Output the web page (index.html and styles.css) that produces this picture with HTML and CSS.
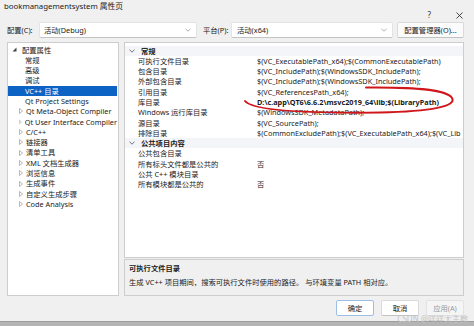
FILE: index.html
```html
<!DOCTYPE html>
<html>
    <head>
        <title>bookmanagementsystem 属性页</title>
        <link rel="stylesheet" href="styles.css">
    </head>
    <body>
        <div class="dialog">
            <div class="titlebar">
                <span class="title">bookmanagementsystem 属性页</span>
                <span class="help">?</span>
                <span class="close">
                    <svg width="7" height="7" viewBox="0 0 7 7"><path d="M0.5 0.5L6.5 6.5M6.5 0.5L0.5 6.5" stroke="#333" stroke-width="0.9" fill="none"/></svg>
                </span>
            </div>

            <div class="configbar">
                <span class="label label1">配置(C):</span>
                <div class="combo combo1">
                    <span>活动(Debug)</span>
                    <svg width="6" height="4" viewBox="0 0 6 4"><path d="M0.5 0.8L3 3.2L5.5 0.8" stroke="#9a9a9a" stroke-width="0.8" fill="none"/></svg>
                </div>
                <span class="label label2">平台(P):</span>
                <div class="combo combo2">
                    <span>活动(x64)</span>
                    <svg width="6" height="4" viewBox="0 0 6 4"><path d="M0.5 0.8L3 3.2L5.5 0.8" stroke="#9a9a9a" stroke-width="0.8" fill="none"/></svg>
                </div>
                <div class="btn manager">配置管理器(O)...</div>
            </div>

            <div class="main">
                <ul class="tree">
                    <li class="open"><svg class="arrow" width="5" height="5" viewBox="0 0 5 5"><path d="M4.5 0.5L4.5 4.5L0.5 4.5Z" fill="#444"/></svg>配置属性</li>
                    <li class="leaf">常规</li>
                    <li class="leaf">高级</li>
                    <li class="leaf">调试</li>
                    <li class="leaf selected">VC++ 目录</li>
                    <li class="leaf">Qt Project Settings</li>
                    <li class="closed"><svg class="arrow" width="4" height="6" viewBox="0 0 4 6"><path d="M0.5 0.5L3.5 3L0.5 5.5Z" stroke="#999" stroke-width="0.7" fill="none"/></svg>Qt Meta-Object Compiler</li>
                    <li class="closed"><svg class="arrow" width="4" height="6" viewBox="0 0 4 6"><path d="M0.5 0.5L3.5 3L0.5 5.5Z" stroke="#999" stroke-width="0.7" fill="none"/></svg>Qt User Interface Compiler</li>
                    <li class="closed"><svg class="arrow" width="4" height="6" viewBox="0 0 4 6"><path d="M0.5 0.5L3.5 3L0.5 5.5Z" stroke="#999" stroke-width="0.7" fill="none"/></svg>C/C++</li>
                    <li class="closed"><svg class="arrow" width="4" height="6" viewBox="0 0 4 6"><path d="M0.5 0.5L3.5 3L0.5 5.5Z" stroke="#999" stroke-width="0.7" fill="none"/></svg>链接器</li>
                    <li class="closed"><svg class="arrow" width="4" height="6" viewBox="0 0 4 6"><path d="M0.5 0.5L3.5 3L0.5 5.5Z" stroke="#999" stroke-width="0.7" fill="none"/></svg>清单工具</li>
                    <li class="closed"><svg class="arrow" width="4" height="6" viewBox="0 0 4 6"><path d="M0.5 0.5L3.5 3L0.5 5.5Z" stroke="#999" stroke-width="0.7" fill="none"/></svg>XML 文档生成器</li>
                    <li class="closed"><svg class="arrow" width="4" height="6" viewBox="0 0 4 6"><path d="M0.5 0.5L3.5 3L0.5 5.5Z" stroke="#999" stroke-width="0.7" fill="none"/></svg>浏览信息</li>
                    <li class="closed"><svg class="arrow" width="4" height="6" viewBox="0 0 4 6"><path d="M0.5 0.5L3.5 3L0.5 5.5Z" stroke="#999" stroke-width="0.7" fill="none"/></svg>生成事件</li>
                    <li class="closed"><svg class="arrow" width="4" height="6" viewBox="0 0 4 6"><path d="M0.5 0.5L3.5 3L0.5 5.5Z" stroke="#999" stroke-width="0.7" fill="none"/></svg>自定义生成步骤</li>
                    <li class="closed"><svg class="arrow" width="4" height="6" viewBox="0 0 4 6"><path d="M0.5 0.5L3.5 3L0.5 5.5Z" stroke="#999" stroke-width="0.7" fill="none"/></svg>Code Analysis</li>
                </ul>

                <div class="rightPane">
                    <div class="grid">
                        <div class="group"><svg class="chev" width="6" height="4" viewBox="0 0 6 4"><path d="M0.5 0.6L3 3.2L5.5 0.6" stroke="#555" stroke-width="0.8" fill="none"/></svg>常规</div>
                        <div class="prop"><span class="name">可执行文件目录</span><span class="value">$(VC_ExecutablePath_x64);$(CommonExecutablePath)</span></div>
                        <div class="prop"><span class="name">包含目录</span><span class="value">$(VC_IncludePath);$(WindowsSDK_IncludePath);</span></div>
                        <div class="prop"><span class="name">外部包含目录</span><span class="value">$(VC_IncludePath);$(WindowsSDK_IncludePath);</span></div>
                        <div class="prop"><span class="name">引用目录</span><span class="value">$(VC_ReferencesPath_x64);</span></div>
                        <div class="prop"><span class="name">库目录</span><span class="value bold">D:\c.app\QT6\6.6.2\msvc2019_64\lib;$(LibraryPath)</span></div>
                        <div class="prop"><span class="name">Windows 运行库目录</span><span class="value">$(WindowsSDK_MetadataPath);</span></div>
                        <div class="prop"><span class="name">源目录</span><span class="value">$(VC_SourcePath);</span></div>
                        <div class="prop"><span class="name">排除目录</span><span class="value">$(CommonExcludePath);$(VC_ExecutablePath_x64);$(VC_Lib</span></div>
                        <div class="group"><svg class="chev" width="6" height="4" viewBox="0 0 6 4"><path d="M0.5 0.6L3 3.2L5.5 0.6" stroke="#555" stroke-width="0.8" fill="none"/></svg>公共项目内容</div>
                        <div class="prop"><span class="name">公共包含目录</span><span class="value"></span></div>
                        <div class="prop"><span class="name">所有标头文件都是公共的</span><span class="value">否</span></div>
                        <div class="prop"><span class="name">公共 C++ 模块目录</span><span class="value"></span></div>
                        <div class="prop"><span class="name">所有模块都是公共的</span><span class="value">否</span></div>
                    </div>
                    <div class="desc">
                        <div class="descTitle">可执行文件目录</div>
                        <div class="descText">生成 VC++ 项目期间，搜索可执行文件时使用的路径。 与环境变量 PATH 相对应。</div>
                    </div>
                </div>
            </div>

            <div class="buttons">
                <div class="btn ok">确定</div>
                <div class="btn cancel">取消</div>
                <div class="btn apply">应用(A)</div>
            </div>
        </div>

        <div class="watermark">CSDN @咩咩大主教</div>

        <svg class="mark" width="474" height="326" viewBox="0 0 474 326">
            <path d="M245 101C252 110 300 113.5 380 112.5C432 111.5 457 106 452 98C447 90 420 87 366 87.5" stroke="#d0161b" stroke-width="2" fill="none" stroke-linecap="round"/>
        </svg>
    </body>
</html>
```

FILE: styles.css
```css
body{
    margin:0;
    width:474px;
    height:326px;
    overflow:hidden;
    position:relative;
    background-color:#b4b4b4;
    font-family:"Noto Sans","Noto Sans CJK SC",sans-serif;
    font-size:7.3px;
    color:#1a1a1a;
}
.dialog{
    height:322px;
    box-sizing:border-box;
    padding:0 10px 0 7px;
    background-color:#f0f0f0;
    border-bottom:1px solid #9d9d9d;
}

/* title bar */
.titlebar{
    height:22px;
    display:flex;
    align-items:flex-start;
}
.title{
    margin-left:-3px;
    margin-top:1px;
    font-size:7.8px;
    line-height:10px;
}
.help{
    margin-left:auto;
    margin-top:10px;
    font-size:8px;
    line-height:10px;
    color:#333;
}
.close{
    margin-left:25px;
    margin-right:1px;
    margin-top:12px;
    line-height:0;
}

/* configuration row */
.configbar{
    height:16px;
    display:flex;
    align-items:center;
}
.label{
    flex:none;
}
.label1{
    width:32px;
}
.label2{
    width:28px;
    margin-left:6px;
}
.combo{
    height:16px;
    box-sizing:border-box;
    display:flex;
    align-items:center;
    justify-content:space-between;
    padding:0 5px 0 4px;
    background-color:#fff;
    border:1px solid #e3e3e3;
    border-bottom-color:#c4c4c4;
    border-radius:2px;
}
.combo1{
    width:158px;
}
.combo2{
    width:162px;
    padding-left:5px;
}
.btn{
    height:16px;
    box-sizing:border-box;
    display:flex;
    align-items:center;
    justify-content:center;
    background-color:#fbfbfb;
    border:1px solid #dadada;
    border-bottom-color:#c2c2c2;
    border-radius:2px;
}
.manager{
    flex:1;
    margin-left:4px;
}

/* main area */
.main{
    display:flex;
    gap:5px;
    height:254px;
    margin-top:4px;
}
.tree{
    width:112px;
    box-sizing:border-box;
    margin:0;
    padding:1.5px 1px 0 0;
    list-style:none;
    background-color:#fff;
    border:1px solid #cdcdcd;
}
.tree li{
    height:10.3px;
    line-height:10.3px;
    white-space:nowrap;
    display:flex;
    align-items:center;
}
.tree .open{
    padding-left:4px;
}
.tree .open .arrow{
    margin-right:5px;
}
.tree .leaf{
    padding-left:17px;
}
.tree .closed{
    padding-left:11px;
}
.tree .closed .arrow{
    margin-right:3px;
}
.tree .selected{
    background-color:#0c63c4;
    color:#fff;
}

.rightPane{
    flex:1;
    display:flex;
    flex-direction:column;
}
.grid{
    height:216px;
    box-sizing:border-box;
    padding-top:2.5px;
    background-color:#fff;
    border:1px solid #cdcdcd;
    overflow:hidden;
}
.group{
    height:10.3px;
    line-height:10.3px;
    display:flex;
    align-items:center;
    padding-left:4px;
    font-weight:bold;
    background-color:#f3f5f9;
}
.chev{
    margin-right:6px;
}
.prop{
    height:10.3px;
    line-height:10.3px;
    display:grid;
    grid-template-columns:132px 1fr;
    white-space:nowrap;
}
.name{
    padding-left:13px;
    overflow:hidden;
}
.value{
    overflow:hidden;
}
.bold{
    font-weight:bold;
}
.desc{
    flex:1;
    margin-top:1px;
    box-sizing:border-box;
    padding:3px 4px;
    background-color:#f0f0f0;
    border:1px solid #cdcdcd;
}
.descTitle{
    font-weight:bold;
    line-height:11px;
}
.descText{
    line-height:11px;
    margin-top:3px;
}

/* bottom buttons */
.buttons{
    display:flex;
    justify-content:flex-end;
    gap:7px;
    margin-top:4px;
}
.buttons .btn{
    width:38px;
}
.ok{
    background-color:#fff;
    border:1.5px solid #9cbfe6;
}
.cancel{
    background-color:#fff;
}
.apply{
    color:#9a9a9a;
    background-color:#f5f5f5;
    border-color:#e2e2e2;
}

/* overlays */
.watermark{
    position:absolute;
    right:6px;
    bottom:2px;
    font-size:8px;
    color:#c4c4c4;
}
.mark{
    position:absolute;
    left:0;
    top:0;
    pointer-events:none;
}
```
